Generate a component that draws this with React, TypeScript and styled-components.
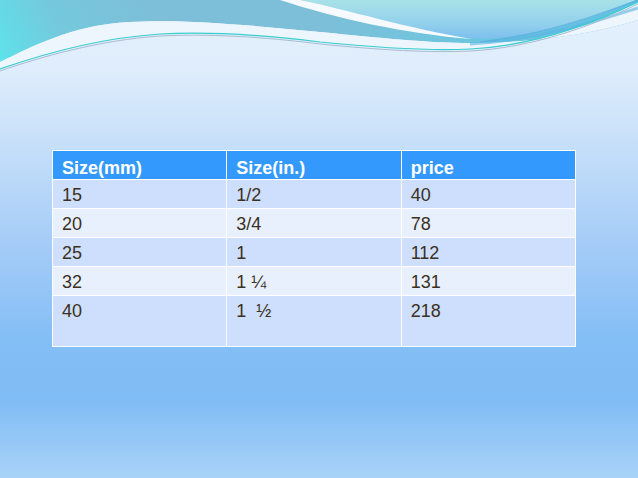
import React, { FC } from 'react';
import styled, { createGlobalStyle } from 'styled-components';

const GlobalStyle = createGlobalStyle`
  html, body {
    margin: 0;
    padding: 0;
  }
  body {
    font-family: 'Liberation Sans', Arial, sans-serif;
  }
`;

const Slide = styled.div`
  width: 638px;
  height: 478px;
  overflow: hidden;
  display: flex;
  flex-direction: column;
  background: linear-gradient(
    180deg,
    #e4f0fc 0px,
    #dfedfc 70px,
    #c4def9 150px,
    #a3cbf7 250px,
    #83bef5 340px,
    #80bcf5 400px,
    #a8d2f8 478px
  );
`;

const Wave = styled.svg`
  display: block;
  width: 638px;
  height: 80px;
  flex: none;
`;

const TableArea = styled.div`
  padding: 70px 0 0 52px;
`;

const Grid = styled.table`
  width: 524px;
  border-collapse: collapse;
  border: 1px solid #ffffff;
  table-layout: fixed;
`;

const HeadCell = styled.th`
  height: 29px;
  box-sizing: border-box;
  padding: 7px 9px 0;
  border: 1px solid #ffffff;
  background: #3499fd;
  color: #ffffff;
  font-size: 18px;
  font-weight: bold;
  line-height: 20px;
  text-align: left;
  vertical-align: top;
`;

const Cell = styled.td<{ $shade: 'dark' | 'light'; $tall?: boolean }>`
  height: ${({ $tall }) => ($tall ? 51 : 29)}px;
  box-sizing: border-box;
  padding: 5px 9px 0;
  border: 1px solid #ffffff;
  background: ${({ $shade }) => ($shade === 'dark' ? '#cedffd' : '#e8f0fe')};
  color: #3a3023;
  font-size: 18px;
  line-height: 20px;
  vertical-align: top;
  white-space: pre;
`;

const rows = [
  ['15', '1/2', '40'],
  ['20', '3/4', '78'],
  ['25', '1', '112'],
  ['32', '1 ¼', '131'],
  ['40', '1  ½', '218'],
];

const TopWave: FC = () => (
  <Wave viewBox="0 0 638 80" preserveAspectRatio="none">
    <defs>
      <linearGradient id="tealGrad" x1="0" y1="70" x2="140" y2="0" gradientUnits="userSpaceOnUse">
        <stop offset="0" stopColor="#5ce4ec" />
        <stop offset="0.45" stopColor="#74c9dd" />
        <stop offset="1" stopColor="#7dbfd9" />
      </linearGradient>
      <linearGradient id="rightTeal" x1="318" y1="0" x2="638" y2="0" gradientUnits="userSpaceOnUse">
        <stop offset="0" stopColor="#7dbfd9" />
        <stop offset="0.5" stopColor="#6cc6df" />
        <stop offset="1" stopColor="#62bfe2" />
      </linearGradient>
      <linearGradient id="aquaGrad" x1="0" y1="0" x2="0" y2="40" gradientUnits="userSpaceOnUse">
        <stop offset="0" stopColor="#a8e2e8" />
        <stop offset="0.6" stopColor="#92d0ec" />
        <stop offset="1" stopColor="#7bbdef" />
      </linearGradient>
    </defs>
    {/* main teal band, left and right halves */}
    <path
      d="M0,0 L320,0 L320,32 C250,25 180,19 130,22 C70,25 30,48 0,62 Z"
      fill="url(#tealGrad)"
    />
    <path
      d="M318,0 L638,0 L638,20 C590,35 530,43 470,43 C430,43 380,38 320,32 L318,32 Z"
      fill="url(#rightTeal)"
    />
    {/* light wash under the teal band */}
    <path
      d="M0,62 C30,48 70,25 130,22 C180,19 250,25 320,32 C380,38 430,43 470,43 C530,43 590,35 638,20 L638,2 C590,25 530,46 470,49 C430,51 380,48 320,42 C280,37 220,31 160,34 C100,38 40,55 0,69 Z"
      fill="#eef6fd"
    />
    {/* aqua swell on the right */}
    <path d="M300,0 C350,10 410,30 470,38 C530,42 600,15 636,0 Z" fill="url(#aquaGrad)" />
    {/* white streak, tapering */}
    <path d="M280,0 L300,0 C345,9 410,29 472,39 C405,34 335,18 280,0 Z" fill="#f6faff" />
    {/* right side streaks */}
    <path d="M470,44 C540,40 600,20 638,8" stroke="#5ab2e2" strokeWidth="3" fill="none" opacity="0.6" />
    <path d="M480,42 C550,34 605,12 638,0" stroke="#4fa9de" strokeWidth="1.2" fill="none" opacity="0.6" />
    {/* thin lines */}
    <path
      d="M0,69 C40,55 100,38 160,34 C220,31 280,37 320,42 C380,48 430,51 470,49 C530,46 590,25 638,2"
      stroke="#39cdd0"
      strokeWidth="1.2"
      fill="none"
    />
    <path
      d="M0,71 C40,57 100,40 160,36 C220,33 280,39 320,44 C380,50 430,53 470,51 C530,48 590,27 638,4"
      stroke="#a9bcd0"
      strokeWidth="1"
      fill="none"
    />
  </Wave>
);

const App: FC = () => (
  <>
    <GlobalStyle />
    <Slide>
      <TopWave />
      <TableArea>
        <Grid>
          <thead>
            <tr>
              <HeadCell>Size(mm)</HeadCell>
              <HeadCell>Size(in.)</HeadCell>
              <HeadCell>price</HeadCell>
            </tr>
          </thead>
          <tbody>
            {rows.map((row, i) => (
              <tr key={row[0]}>
                {row.map((value, j) => (
                  <Cell key={j} $shade={i % 2 === 0 ? 'dark' : 'light'} $tall={i === rows.length - 1}>
                    {value}
                  </Cell>
                ))}
              </tr>
            ))}
          </tbody>
        </Grid>
      </TableArea>
    </Slide>
  </>
);

export default App;
